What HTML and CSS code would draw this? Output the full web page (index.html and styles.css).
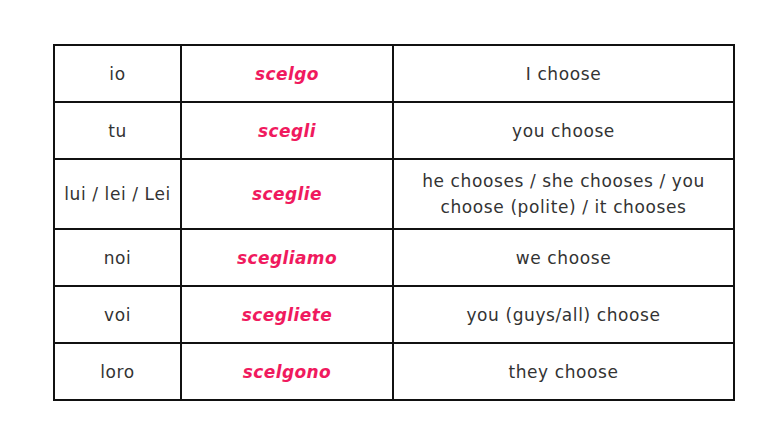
FILE: index.html
```html
<!DOCTYPE html>
<html lang="it">
<head>
<meta charset="utf-8">
<title>scegliere</title>
<link rel="stylesheet" href="styles.css">
</head>
<body>
<main class="page">
  <table class="conj">
    <colgroup>
      <col class="c-pron">
      <col class="c-verb">
      <col class="c-trans">
    </colgroup>
    <tbody>
      <tr><td>io</td><td class="verb">scelgo</td><td>I choose</td></tr>
      <tr><td>tu</td><td class="verb">scegli</td><td>you choose</td></tr>
      <tr class="tall"><td>lui / lei / Lei</td><td class="verb">sceglie</td><td>he chooses / she chooses / you<br>choose (polite) / it chooses</td></tr>
      <tr><td>noi</td><td class="verb">scegliamo</td><td>we choose</td></tr>
      <tr><td>voi</td><td class="verb">scegliete</td><td>you (guys/all) choose</td></tr>
      <tr><td>loro</td><td class="verb">scelgono</td><td>they choose</td></tr>
    </tbody>
  </table>
</main>
</body>
</html>
```
FILE: styles.css
```css
html, body {
  margin: 0;
  padding: 0;
  background: #ffffff;
}
.page {
  padding: 44px 0 0 53px;
}
.conj {
  border-collapse: collapse;
  table-layout: fixed;
  width: 680px;
  font-family: "DejaVu Sans", "Open Sans", sans-serif;
  font-size: 17px;
  letter-spacing: 0.6px;
  color: #333333;
}
.c-pron { width: 127px; }
.c-verb { width: 212px; }
.c-trans { width: 341px; }
.conj td {
  border: 2px solid #111111;
  text-align: center;
  vertical-align: middle;
  height: 55px;
  padding: 0 2px;
  line-height: 26px;
}
.conj tr.tall td {
  height: 68px;
}
.conj td.verb {
  color: #f01a5e;
  font-style: italic;
  font-weight: 700;
  letter-spacing: 0.4px;
}
```
